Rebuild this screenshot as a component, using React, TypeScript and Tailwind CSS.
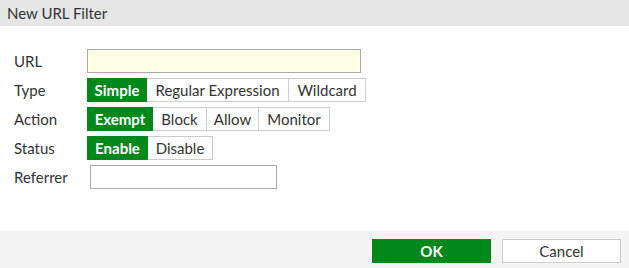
import React from "react";

const font = { fontFamily: "Lato, 'Open Sans', sans-serif" };

function Group({ items, widths }: { items: string[]; widths: string[] }) {
  return (
    <div className="flex h-[24px]">
      {items.map((it, i) => (
        <div
          key={it}
          className={
            (i === 0
              ? "bg-[#00881a] text-white font-bold border border-[#00881a] "
              : "bg-white text-[#333] border border-l-0 border-[#cccccc] ") +
            "flex items-center justify-center text-[15px] leading-none " +
            widths[i]
          }
        >
          {it}
        </div>
      ))}
    </div>
  );
}

export default function App() {
  return (
    <div className="w-[629px] h-[268px] bg-white flex flex-col" style={font}>
      <div className="h-[26px] bg-[#e6e6e6] flex items-center pl-[7px] text-[15px] text-[#333]">
        New URL Filter
      </div>
      <div className="flex-1 flex flex-col gap-[5px] pt-[23px]">
        <div className="flex items-center h-[24px]">
          <div className="w-[87px] pl-[14px] text-[15px] text-[#333]">URL</div>
          <div className="w-[274px] h-[24px] bg-[#ffffe6] border border-[#aaaaaa]" />
        </div>
        <div className="flex items-center h-[24px]">
          <div className="w-[87px] pl-[14px] text-[15px] text-[#333]">Type</div>
          <Group items={["Simple", "Regular Expression", "Wildcard"]} widths={["w-[60px]", "w-[142px]", "w-[77px]"]} />
        </div>
        <div className="flex items-center h-[24px]">
          <div className="w-[87px] pl-[14px] text-[15px] text-[#333]">Action</div>
          <Group items={["Exempt", "Block", "Allow", "Monitor"]} widths={["w-[66px]", "w-[54px]", "w-[52px]", "w-[71px]"]} />
        </div>
        <div className="flex items-center h-[24px]">
          <div className="w-[87px] pl-[14px] text-[15px] text-[#333]">Status</div>
          <Group items={["Enable", "Disable"]} widths={["w-[61px]", "w-[65px]"]} />
        </div>
        <div className="flex items-center h-[24px]">
          <div className="w-[90px] pl-[14px] text-[15px] text-[#333]">Referrer</div>
          <div className="w-[187px] h-[24px] bg-white border border-[#aaaaaa]" />
        </div>
      </div>
      <div className="h-[37px] bg-[#f4f4f4] flex justify-end items-start pt-[8px] pr-[8px] gap-[11px]">
        <div className="w-[119px] h-[24px] bg-[#00881a] text-white text-[15px] font-bold flex items-center justify-center">
          OK
        </div>
        <div className="w-[119px] h-[24px] bg-white border border-[#cccccc] text-[#333] text-[15px] flex items-center justify-center">
          Cancel
        </div>
      </div>
    </div>
  );
}
